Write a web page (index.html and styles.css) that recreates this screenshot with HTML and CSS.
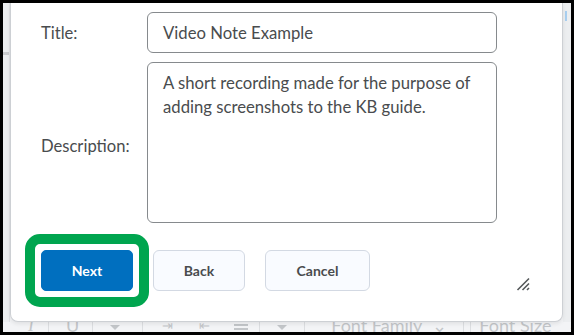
FILE: index.html
```html
<!DOCTYPE html>
<html lang="en">
    <head>
        <meta charset="UTF-8">
        <meta name="viewport" content="width=device-width, initial-scale=1.0">
        <title>Video Note</title>
        <link rel="stylesheet" href="styles.css">
    </head>
<body>
    <div class="screen">
        <div class="strip strip-left"><span class="strip-bar"></span></div>
        <div class="dialog">
            <div class="form">
                <label class="label" for="title">Title:</label>
                <div class="field" id="title">Video Note Example</div>
                <label class="label label-desc" for="desc">Description:</label>
                <div class="field area" id="desc">A short recording made for the purpose of adding screenshots to the KB guide.</div>
            </div>
            <div class="actions">
                <button class="btn primary">Next</button>
                <button class="btn">Back</button>
                <button class="btn cancel">Cancel</button>
                <svg class="grip" width="14" height="14" viewBox="0 0 14 14">
                    <path d="M1.5 13 L13 1.5 M6.5 13 L13 6.5 M11 13 L13 11" stroke="#565a5c" stroke-width="1.6" fill="none"/>
                </svg>
            </div>
        </div>
        <div class="strip strip-right"><span class="strip-blue"></span></div>
        <div class="toolbar">
            <span class="tb tb-i">I</span>
            <span class="tb-sep s1"></span>
            <span class="tb tb-u">U</span>
            <span class="tb-sep s2"></span>
            <span class="tb-tri t1"></span>
            <span class="tb-sep s3"></span>
            <span class="tb-ind i1">⇥</span>
            <span class="tb-ind i2">⇤</span>
            <span class="tb-list"></span>
            <span class="tb-sep s4"></span>
            <span class="tb-tri t2"></span>
            <span class="tb-sep s5"></span>
            <span class="tb tb-font">Font Family</span>
            <span class="tb-chev">⌄</span>
            <span class="tb-sep s6"></span>
            <span class="tb-sep s7"></span>
            <span class="tb tb-size">Font Size</span>
            <span class="tb-chev c2">⌄</span>
        </div>
    </div>
</body>
</html>
```

FILE: styles.css
```css
body {
    margin: 0;
    background-color: #000;
    font-family: Lato, "Open Sans", sans-serif;
}
.screen {
    margin: 3px;
    width: 568px;
    height: 329px;
    background-color: #f3f4f6;
    display: grid;
    grid-template-columns: 7px 553px 8px;
    grid-template-rows: 319px 10px;
    overflow: hidden;
}
.strip {
    background-color: #eceef0;
    display: flex;
    flex-direction: column;
}
.strip-left {
    border-right: 1px solid #e0e2e5;
}
.strip-bar {
    margin-top: 49px;
    height: 3px;
    background-color: #c9cbce;
}
.strip-blue {
    margin: 8px 0 0 2px;
    width: 2px;
    height: 10px;
    background-color: #a9cff0;
}
.dialog {
    background-color: #fff;
    border: 1px solid #cdd0d4;
    border-top: none;
    border-radius: 0 0 8px 8px;
    box-shadow: 0 2px 4px rgba(0, 0, 0, 0.08);
    padding: 9px 0 0 30px;
    position: relative;
    z-index: 1;
}
.form {
    display: grid;
    grid-template-columns: 106px 350px;
    row-gap: 9px;
}
.label {
    color: #494c4e;
    font-size: 16.6px;
    display: flex;
    align-items: center;
}
.label-desc {
    padding-top: 6px;
}
.field {
    height: 41px;
    box-sizing: border-box;
    border: 1px solid #868a8d;
    border-radius: 6px;
    padding: 0 15px;
    color: #494c4e;
    font-size: 16.7px;
    display: flex;
    align-items: center;
}
.area {
    height: 161px;
    align-items: flex-start;
    padding-top: 8px;
    line-height: 24px;
}
.actions {
    display: flex;
    align-items: flex-end;
    gap: 20px;
    margin-top: 27px;
    padding-right: 32px;
}
.btn {
    font-family: Lato, "Open Sans", sans-serif;
    font-weight: 700;
    font-size: 14px;
    width: 92px;
    height: 41px;
    border: 1px solid #d3d9e3;
    border-radius: 6px;
    background-color: #f9fbff;
    color: #494c4e;
    cursor: pointer;
}
.cancel {
    width: 105px;
}
.primary {
    background-color: #006fbf;
    border-color: #006fbf;
    border-radius: 5px;
    color: #fff;
    position: relative;
}
/* highlight ring from the KB screenshot */
.primary::after {
    content: "";
    position: absolute;
    top: -17px;
    left: -17px;
    right: -17px;
    bottom: -17px;
    border: 10px solid #00a54f;
    border-radius: 15px;
}
.grip {
    margin-left: auto;
}
.toolbar {
    grid-column: 1 / 4;
    display: flex;
    align-items: flex-start;
    color: #c3c6c9;
    font-size: 18px;
    line-height: 18px;
    white-space: nowrap;
    margin-top: -6px;
    padding-left: 25px;
    position: relative;
    z-index: 0;
}
.toolbar > span {
    flex-shrink: 0;
}
.tb-sep {
    width: 1px;
    height: 18px;
    background-color: #dcdee1;
}
.tb-i {
    font-style: italic;
    font-family: "Liberation Serif", serif;
}
.s1 { margin-left: 14px; }
.tb-u { margin-left: 17px; }
.s2 { margin-left: 13px; }
.t1 { margin-left: 17px; }
.s3 { margin-left: 22px; }
.i1 { margin-left: 19px; }
.i2 { margin-left: 26px; }
.tb-list { margin-left: 24px; }
.s4 { margin-left: 11px; }
.t2 { margin-left: 17px; }
.s5 { margin-left: 17px; }
.tb-font { margin-left: 26px; }
.tb-chev { margin-left: 10px; }
.s6 { margin-left: 16px; }
.s7 { margin-left: 6px; }
.tb-size { margin-left: 8px; }
.c2 { margin-left: 16px; }
.tb-tri {
    width: 0;
    height: 0;
    margin-top: 9px;
    border-left: 5px solid transparent;
    border-right: 5px solid transparent;
    border-top: 5px solid #c3c6c9;
}
.tb-ind {
    font-size: 13px;
}
.tb-list {
    width: 14px;
    height: 2px;
    margin-top: 8px;
    border-top: 2px solid #c3c6c9;
    border-bottom: 2px solid #c3c6c9;
}
```
